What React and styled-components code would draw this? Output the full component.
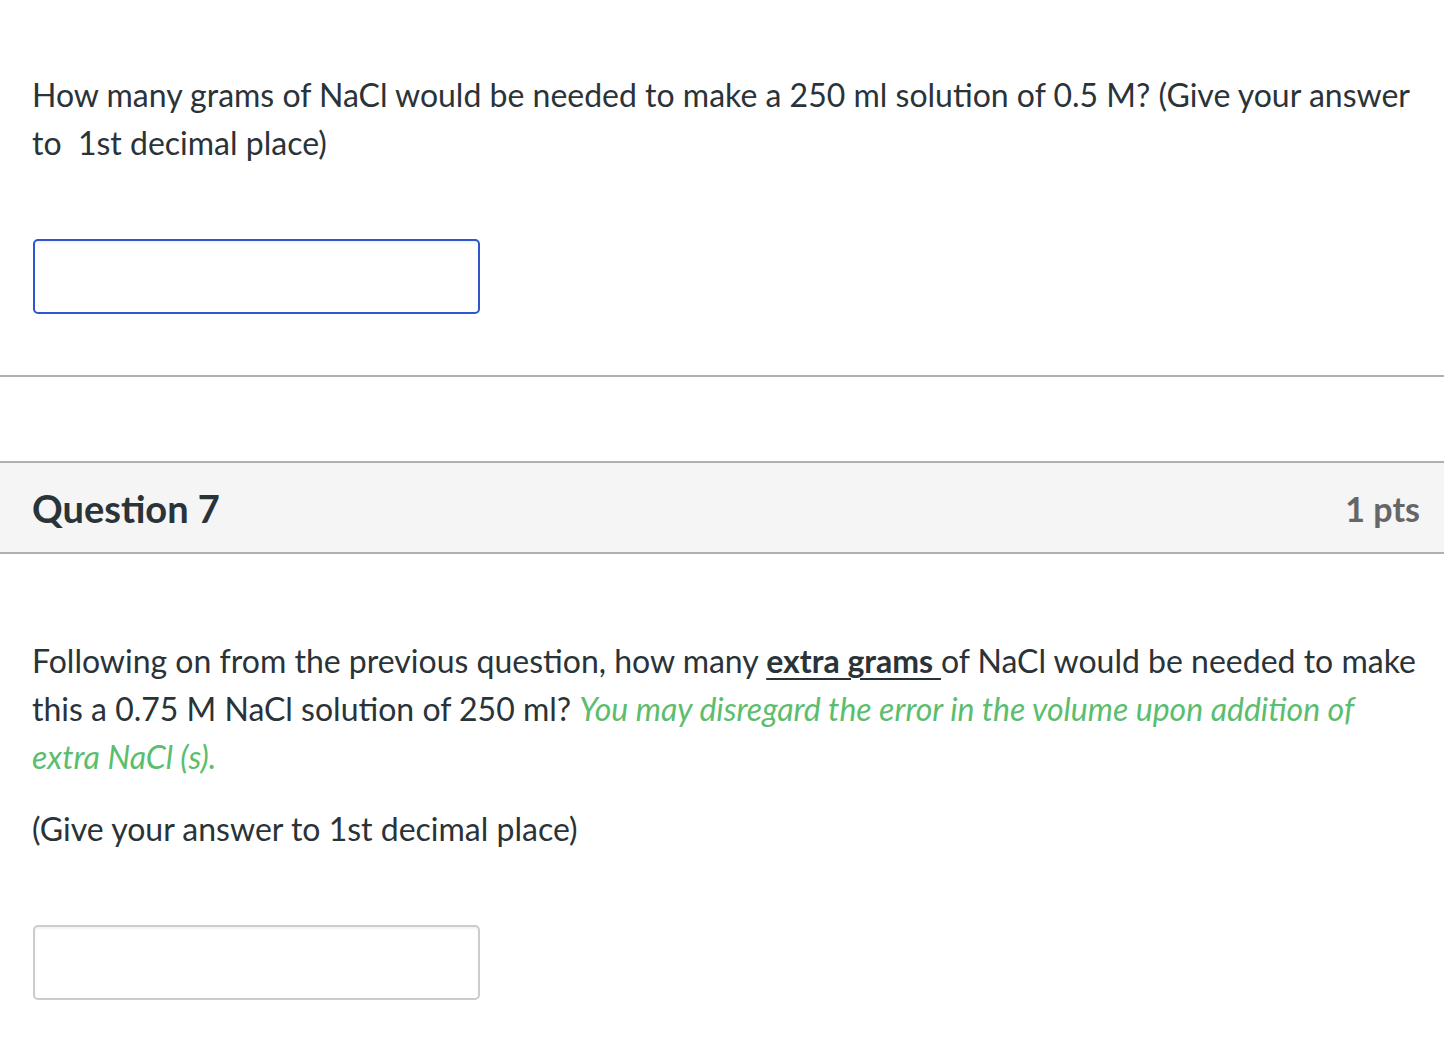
import React from 'react';
import styled, { createGlobalStyle } from 'styled-components';

const GlobalStyle = createGlobalStyle`
    html, body {
        margin: 0;
        padding: 0;
        background: #ffffff;
    }
    body {
        font-family: Lato, "Noto Sans", "Liberation Sans", sans-serif;
        color: #2d3b45;
    }
`;

const Page = styled.div`
    padding-top: 71px;
    padding-bottom: 40px;
`;

const Body = styled.div`
    padding: 0 24px 0 32px;
`;

const Text = styled.p`
    margin: 0 0 ${props => props.gap || 0}px 0;
    font-size: 32px;
    line-height: 48px;
    color: #2a3338;
`;

const Strong = styled.span`
    font-weight: 700;
    text-decoration: underline;
    text-underline-offset: 5px;
    text-decoration-thickness: 2px;
`;

const Hint = styled.em`
    color: #5bbd6e;
    font-style: italic;
`;

const AnswerInput = styled.input`
    display: block;
    box-sizing: border-box;
    width: 447px;
    height: 75px;
    margin: 0 0 0 1px;
    padding: 0 12px;
    border: 2px solid ${props => (props.focused ? '#2f56cf' : '#c7cdd1')};
    border-radius: 5px;
    background: #fff;
    box-shadow: inset 0 2px 2px rgba(0, 0, 0, 0.05);
    font-family: inherit;
    font-size: 28px;
    outline: none;
`;

const Divider = styled.hr`
    margin: 61px 0 0 0;
    border: 0;
    border-top: 2px solid #b0b0b0;
    height: 0;
`;

const QuestionHeader = styled.div`
    margin-top: 84px;
    height: 89px;
    display: flex;
    align-items: center;
    justify-content: space-between;
    padding: 0 24px 0 32px;
    background: #f5f5f5;
    border-top: 2px solid #b0b0b0;
    border-bottom: 2px solid #b0b0b0;
`;

const QuestionTitle = styled.h2`
    margin: 0;
    font-size: 38px;
    font-weight: 700;
    color: #2a3338;
`;

const Points = styled.span`
    font-size: 34px;
    font-weight: 700;
    color: #666666;
    padding-top: 2px;
`;

const QuestionBody = styled(Body)`
    padding-top: 83px;
`;

export default function App() {
    return (
        <Page>
            <GlobalStyle />
            <Body>
                <Text gap={72}>
                    How many grams of NaCl would be needed to make a 250 ml solution of 0.5 M? (Give your answer to&nbsp; 1st decimal place)
                </Text>
                <AnswerInput type="text" focused />
            </Body>
            <Divider />
            <QuestionHeader>
                <QuestionTitle>Question 7</QuestionTitle>
                <Points>1 pts</Points>
            </QuestionHeader>
            <QuestionBody>
                <Text gap={24}>
                    Following on from the previous question, how many <Strong>extra grams </Strong>of NaCl would be needed to make this a 0.75 M NaCl solution of 250 ml? <Hint>You may disregard the error in the volume upon addition of extra NaCl (s).</Hint>
                </Text>
                <Text gap={72}>(Give your answer to 1st decimal place)</Text>
                <AnswerInput type="text" />
            </QuestionBody>
        </Page>
    );
}
